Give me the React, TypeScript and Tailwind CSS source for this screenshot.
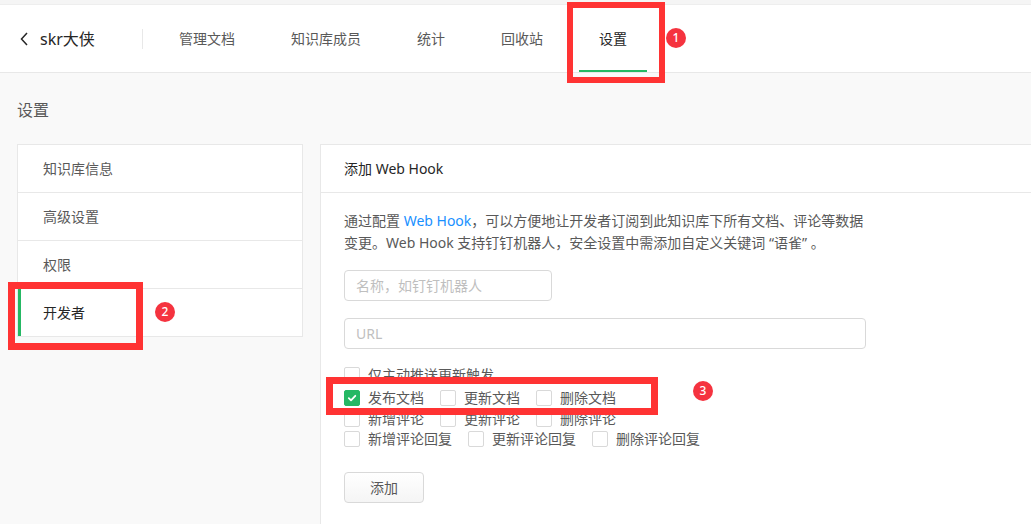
import { useState } from 'react';

const navItems = ['管理文档', '知识库成员', '统计', '回收站', '设置'];
const menuItems = ['知识库信息', '高级设置', '权限', '开发者'];

function Checkbox({ checked, label, onToggle }: { checked: boolean; label: string; onToggle: () => void }) {
  return (
    <label className="flex items-center mr-4 cursor-pointer" onClick={onToggle}>
      {checked ? (
        <span className="w-4 h-4 rounded-[2px] bg-[#25b864] border border-[#25b864] flex items-center justify-center">
          <svg width="10" height="10" viewBox="0 0 10 10" fill="none">
            <path d="M1.8 5.2 L4 7.3 L8.3 2.8" stroke="white" strokeWidth="1.8" strokeLinecap="round" strokeLinejoin="round" />
          </svg>
        </span>
      ) : (
        <span className="w-4 h-4 rounded-[2px] bg-white border border-[#d9d9d9]" />
      )}
      <span className="ml-2">{label}</span>
    </label>
  );
}

function Badge({ n, className }: { n: number; className: string }) {
  return (
    <div
      className={`absolute w-5 h-5 rounded-full bg-[#f5333f] text-white text-[12px] leading-5 text-center font-medium ${className}`}
    >
      {n}
    </div>
  );
}

export default function App() {
  const [checked, setChecked] = useState<Record<string, boolean>>({ 发布文档: true });
  const toggle = (k: string) => setChecked({ ...checked, [k]: !checked[k] });

  const rows = [
    ['仅主动推送更新触发'],
    ['发布文档', '更新文档', '删除文档'],
    ['新增评论', '更新评论', '删除评论'],
    ['新增评论回复', '更新评论回复', '删除评论回复'],
  ];

  return (
    <div
      className="relative w-[1031px] h-[524px] overflow-hidden bg-[#f9f9f9] text-[#595959]"
      style={{ fontFamily: '"Noto Sans", "Noto Sans CJK SC", sans-serif' }}
    >
      {/* top bar */}
      <div className="h-[5px] bg-[#f5f5f5] border-b border-[#eeeeee]" />
      <div className="h-[68px] bg-white border-b border-[#e8e8e8] flex items-stretch">
        <div className="w-[142px] flex items-center pl-[19px] text-[#262626]">
          <svg width="10" height="16" viewBox="0 0 10 16" fill="none">
            <path d="M8 2 L2.5 8 L8 14" stroke="#262626" strokeWidth="1.5" />
          </svg>
          <span className="ml-[11px] text-[16px] leading-6">skr大侠</span>
        </div>
        <div className="self-center h-[20px] border-l border-[#e8e8e8]" />
        <nav className="ml-4 flex gap-4 text-[14px]">
          {navItems.map((item) => (
            <div
              key={item}
              className={`relative px-5 flex items-center ${item === '设置' ? 'text-[#262626]' : 'text-[#595959]'}`}
            >
              {item}
              {item === '设置' && <div className="absolute left-0 right-0 bottom-0 h-[2px] bg-[#25b864]" />}
            </div>
          ))}
        </nav>
      </div>

      {/* body */}
      <div className="pl-[17px] pt-[25px]">
        <h1 className="text-[16px] leading-6 text-[#595959]">设置</h1>
        <div className="mt-[22px] flex items-start">
          <div className="w-[286px] shrink-0 bg-white border border-[#e8e8e8] text-[14px]">
            {menuItems.map((item, i) => (
              <div
                key={item}
                className={`relative h-[47px] flex items-center pl-[25px] ${i > 0 ? 'border-t border-[#e8e8e8] h-[48px]' : ''} ${
                  item === '开发者' ? 'text-[#262626]' : 'text-[#595959]'
                }`}
              >
                {item === '开发者' && <div className="absolute left-0 top-0 bottom-0 w-[3px] bg-[#25b864]" />}
                {item}
              </div>
            ))}
          </div>

          <div className="ml-[17px] w-[720px] shrink-0 h-[400px] bg-white border-l border-t border-[#e8e8e8] text-[14px]">
            <div className="h-[48px] flex items-center px-[23px] border-b border-[#e8e8e8] text-[#262626]">
              添加 Web Hook
            </div>
            <div className="px-[23px] pt-[17px]">
              <p className="leading-[22px] text-[#595959]">
                通过配置 <span className="text-[#1890ff]">Web Hook</span>，可以方便地让开发者订阅到此知识库下所有文档、评论等数据
                <br />
                变更。Web Hook 支持钉钉机器人，安全设置中需添加自定义关键词 “语雀” 。
              </p>
              <input
                className="mt-[16px] block w-[208px] h-[31px] rounded border border-[#d9d9d9] px-[11px] outline-none placeholder:text-[#bfbfbf]"
                placeholder="名称，如钉钉机器人"
              />
              <input
                className="mt-[17px] block w-[522px] h-[31px] rounded border border-[#d9d9d9] px-[11px] outline-none placeholder:text-[#bfbfbf]"
                placeholder="URL"
              />
              <div className="mt-[16px] leading-[20px]">
                {rows.map((row, i) => (
                  <div key={i} className={`flex ${i === 1 ? 'mt-[3px] mb-[1px]' : ''}`}>
                    {row.map((k) => (
                      <Checkbox key={k} label={k} checked={!!checked[k]} onToggle={() => toggle(k)} />
                    ))}
                  </div>
                ))}
              </div>
              <button className="mt-[23px] w-20 h-[31px] rounded border border-[#d9d9d9] bg-gradient-to-b from-white to-[#f5f5f5] text-[#595959]">
                添加
              </button>
            </div>
          </div>
        </div>
      </div>

      {/* annotations */}
      <div className="absolute left-[567px] top-[2px] w-[98px] h-[81px] border-[6px] border-[#ff3333]" />
      <Badge n={1} className="left-[666px] top-[28px]" />
      <div className="absolute left-[8px] top-[282px] w-[135px] h-[68px] border-[7px] border-[#ff3333]" />
      <Badge n={2} className="left-[155px] top-[302px]" />
      <div className="absolute left-[326px] top-[377px] w-[332px] h-[38px] border-[7px] border-[#ff3333]" />
      <Badge n={3} className="left-[693px] top-[381px]" />
    </div>
  );
}
